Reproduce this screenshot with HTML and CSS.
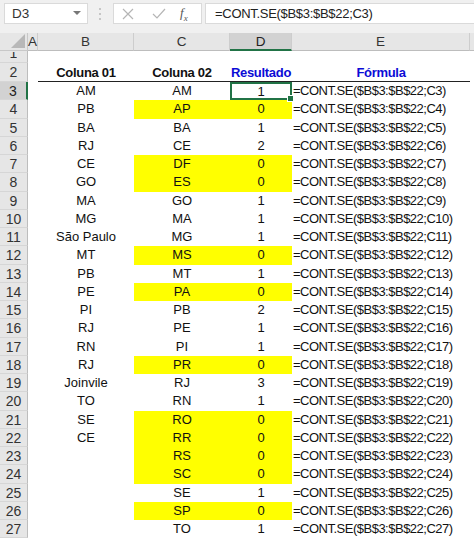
FILE: index.html
```html
<!DOCTYPE html>
<html>
<head>
<meta charset="utf-8">
<link rel="stylesheet" href="styles.css">
</head>
<body>
<div class="app">
  <div class="fbar">
    <div class="namebox"><span>D3</span><svg class="dd" width="8" height="5" viewBox="0 0 8 5"><path d="M0 0h8L4 4z" fill="#777"/></svg></div>
    <div class="grip"><i></i><i></i><i></i></div>
    <div class="btns">
      <svg width="12" height="12" viewBox="0 0 12 12"><path d="M1 1l10 10M11 1L1 11" stroke="#b5b5b5" stroke-width="1.2"/></svg>
      <svg width="14" height="12" viewBox="0 0 14 12"><path d="M1 6l4 4 8-9" stroke="#b5b5b5" stroke-width="1.2" fill="none"/></svg>
      <span class="fx">f<sub>x</sub></span>
    </div>
    <div class="formula">=CONT.SE($B$3:$B$22;C3)</div>
  </div>
  <div class="sheet" id="sheet">
    <div class="corner"><svg width="18" height="14" viewBox="0 0 18 14"><path d="M18 0v14H4z" fill="#b8b8b8"/></svg></div>
    <div class="ch">A</div>
    <div class="ch">B</div>
    <div class="ch">C</div>
    <div class="ch sel">D</div>
    <div class="ch">E</div>
    <div class="ch end"></div>

    <div class="rh r1"><span>1</span></div>
    <div class="c r1"></div><div class="c r1"></div><div class="c r1"></div><div class="c r1"></div><div class="c r1"></div><div class="c r1"></div>

    <div class="rh">2</div>
    <div class="c"></div>
    <div class="c hd">Coluna 01</div>
    <div class="c hd">Coluna 02</div>
    <div class="c hd blue">Resultado</div>
    <div class="c hd blue">Fórmula</div>
    <div class="c"></div>
  </div>
</div>
<script src="app.js"></script>
</body>
</html>
```
FILE: app.js
```js
var rows = [
  [3,"AM","AM",1],[4,"PB","AP",0],[5,"BA","BA",1],[6,"RJ","CE",2],[7,"CE","DF",0],
  [8,"GO","ES",0],[9,"MA","GO",1],[10,"MG","MA",1],[11,"São Paulo","MG",1],[12,"MT","MS",0],
  [13,"PB","MT",1],[14,"PE","PA",0],[15,"PI","PB",2],[16,"RJ","PE",1],[17,"RN","PI",1],
  [18,"RJ","PR",0],[19,"Joinvile","RJ",3],[20,"TO","RN",1],[21,"SE","RO",0],[22,"CE","RR",0],
  [23,"","RS",0],[24,"","SC",0],[25,"","SE",1],[26,"","SP",0],[27,"","TO",1]
];
var sheet = document.getElementById("sheet");
var html = "";
rows.forEach(function (r) {
  var y = r[3] === 0 ? " y" : "";
  html += '<div class="rh' + (r[0] === 3 ? ' rsel' : '') + '">' + r[0] + '</div>';
  html += '<div class="c"></div>';
  html += '<div class="c ctr">' + r[1] + '</div>';
  html += '<div class="c ctr' + y + '">' + r[2] + '</div>';
  html += '<div class="c ctr' + y + (r[0] === 3 ? ' active' : '') + '">' + r[3] + '</div>';
  html += '<div class="c left">=CONT.SE($B$3:$B$22;C' + r[0] + ')</div>';
  html += '<div class="c"></div>';
});
sheet.insertAdjacentHTML("beforeend", html);
```
FILE: styles.css
```css
html, body {
  margin: 0;
  padding: 0;
  background: #fff;
}
.app {
  width: 474px;
  height: 540px;
  overflow: hidden;
  font-family: "Liberation Sans", Arial, sans-serif;
  color: #222;
}
.fbar {
  height: 33px;
  background: #f0f0f0;
  display: flex;
  align-items: flex-start;
  padding-top: 3px;
  box-sizing: border-box;
}
.namebox {
  margin-left: 4px;
  width: 84px;
  height: 21px;
  background: #fff;
  border: 1px solid #dadada;
  box-sizing: border-box;
  display: flex;
  align-items: center;
  justify-content: space-between;
  padding: 0 6px 0 7px;
  font-size: 13.5px;
  color: #333;
}
.grip {
  width: 24px;
  display: flex;
  flex-direction: column;
  align-items: center;
  gap: 3px;
  padding-top: 5px;
}
.grip i {
  width: 2px;
  height: 2px;
  background: #c6c6c6;
}
.btns {
  width: 89px;
  height: 21px;
  margin-left: 1px;
  background: #fff;
  border: 1px solid #dadada;
  box-sizing: border-box;
  display: flex;
  align-items: center;
  padding-left: 8px;
  gap: 18px;
}
.fx {
  font-family: "Liberation Serif", serif;
  font-style: italic;
  font-size: 13px;
  color: #555;
  margin-left: -4px;
}
.fx sub {
  font-size: 9px;
}
.formula {
  margin-left: 3px;
  flex: 1;
  height: 21px;
  background: #fff;
  border: 1px solid #dadada;
  border-right: none;
  box-sizing: border-box;
  padding-left: 9px;
  font-size: 13px;
  letter-spacing: -0.3px;
  line-height: 19px;
  color: #222;
}
.sheet {
  display: grid;
  grid-template-columns: 28px 10px 96px 96px 62px 178px 4px;
  grid-template-rows: 18px 12px 19px repeat(25, 18.25px);
  background: #fff;
}
.corner {
  background: #e6e6e6;
  border-right: 1px solid #c8c8c8;
  border-bottom: 1px solid #c8c8c8;
  box-sizing: border-box;
  display: flex;
  align-items: flex-end;
  justify-content: flex-end;
  padding: 0 2px 2px 0;
}
.ch {
  background: #e6e6e6;
  border-right: 1px solid #cdcdcd;
  border-bottom: 1px solid #bdbdbd;
  box-sizing: border-box;
  font-size: 13.5px;
  color: #333;
  text-align: center;
  line-height: 17px;
}
.ch.sel {
  background: #d2d2d2;
  border-bottom: 2px solid #217346;
  color: #222;
}
.ch.end {
  border-right: none;
}
.rh {
  background: #e6e6e6;
  border-right: 1px solid #bdbdbd;
  border-bottom: 1px solid #d6d6d6;
  box-sizing: border-box;
  font-size: 14px;
  color: #333;
  text-align: center;
  line-height: 18px;
  overflow: hidden;
}
.rh.r1 {
  display: flex;
  align-items: flex-end;
  justify-content: center;
  line-height: 12px;
}
.rh.r1 span {
  height: 7px;
  overflow: hidden;
  display: flex;
  align-items: flex-end;
  line-height: 12px;
  margin-bottom: 3px;
}
.rh.rsel {
  background: #d2d2d2;
  border-right: 2px solid #217346;
  color: #222;
}
.c {
  font-size: 13px;
  line-height: 18px;
  white-space: nowrap;
  overflow: visible;
  color: #111;
  box-sizing: border-box;
}
.hd {
  font-weight: bold;
  text-align: center;
  border-bottom: 1px solid #222;
  line-height: 19px;
  letter-spacing: -0.3px;
}
.blue {
  color: #0b0bd6;
}
.ctr {
  text-align: center;
}
.left {
  text-align: left;
  padding-left: 1px;
  letter-spacing: -0.5px;
}
.y {
  background: #ffff00;
}
.active {
  border: 2px solid #217346;
  line-height: 15px;
  position: relative;
}
.active::after {
  content: "";
  position: absolute;
  right: -4px;
  bottom: -4px;
  width: 5px;
  height: 5px;
  background: #217346;
  border: 1px solid #fff;
}
```
